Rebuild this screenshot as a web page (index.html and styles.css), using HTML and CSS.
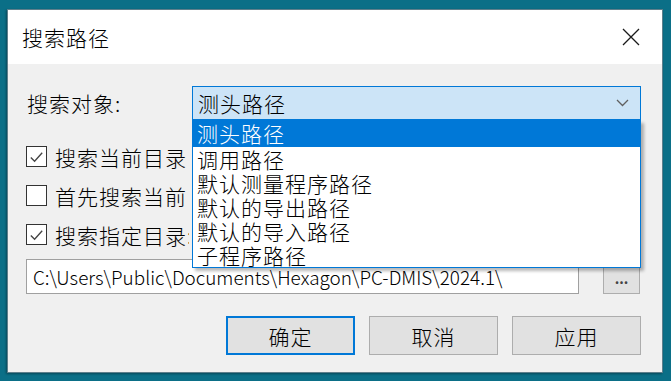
FILE: index.html
```html
<!DOCTYPE html>
<html lang="zh-CN">
<head>
<meta charset="utf-8">
<title>搜索路径</title>
<link rel="stylesheet" href="styles.css">
</head>
<body>
<div class="window">
  <div class="titlebar">
    <span class="title">搜索路径</span>
    <svg class="close" width="18" height="18" viewBox="0 0 18 18"><path d="M1 1L17 17M17 1L1 17" stroke="#1a1a1a" stroke-width="1.3" fill="none"/></svg>
  </div>
  <div class="content">
    <div class="row-target">
      <label class="target-label">搜索对象:</label>
      <div class="combo-wrap">
        <div class="combo">
          <span class="combo-text">测头路径</span>
          <svg class="chev" width="13" height="8" viewBox="0 0 13 8"><path d="M1 1L6.5 6.5L12 1" stroke="#606060" stroke-width="1.3" fill="none"/></svg>
        </div>
        <ul class="dropdown">
          <li class="sel">测头路径</li>
          <li>调用路径</li>
          <li>默认测量程序路径</li>
          <li>默认的导出路径</li>
          <li>默认的导入路径</li>
          <li>子程序路径</li>
        </ul>
      </div>
    </div>
    <div class="checks">
      <div class="check-row"><span class="box"><svg width="20" height="20" viewBox="0 0 20 20"><path d="M4 10.5L8 14.5L16 5.5" stroke="#444" stroke-width="1.4" fill="none"/></svg></span><span class="clabel">搜索当前目录</span></div>
      <div class="check-row"><span class="box"></span><span class="clabel">首先搜索当前目录</span></div>
      <div class="check-row"><span class="box"><svg width="20" height="20" viewBox="0 0 20 20"><path d="M4 10.5L8 14.5L16 5.5" stroke="#444" stroke-width="1.4" fill="none"/></svg></span><span class="clabel">搜索指定目录:</span></div>
    </div>
    <div class="path-row">
      <div class="path-input">C:\Users\Public\Documents\Hexagon\PC-DMIS\2024.1\</div>
      <button class="browse">...</button>
    </div>
    <div class="buttons">
      <button class="btn default">确定</button>
      <button class="btn">取消</button>
      <button class="btn">应用</button>
    </div>
  </div>
</div>
</body>
</html>
```
FILE: styles.css
```css
* { box-sizing: border-box; }
html, body { margin: 0; padding: 0; }
body {
  width: 671px;
  height: 381px;
  background: #0b6f87;
  font-family: "Noto Sans CJK SC", "Noto Sans", sans-serif;
  font-weight: 300;
  color: #000;
  overflow: hidden;
  padding: 9px 0 0 7px;
}
.window {
  width: 656px;
  height: 364px;
  border: 1px solid #5e7f8c;
  background: #f0f0f0;
  display: flex;
  flex-direction: column;
  box-shadow: -1px 1px 2px rgba(0,0,0,0.35);
}
.titlebar {
  height: 54px;
  background: #fff;
  display: flex;
  align-items: center;
  justify-content: space-between;
  padding: 0 22px 0 14px;
}
.title {
  font-size: 21px;
  letter-spacing: 1px;
}
.close { display: block; }
.content {
  flex: 1;
  padding: 22px 21px 0 18px;
  display: flex;
  flex-direction: column;
}
.row-target {
  display: flex;
  align-items: center;
  height: 34px;
}
.target-label {
  width: 166px;
  font-size: 21px;
  letter-spacing: 1px;
  padding-left: 1px;
}
.combo-wrap {
  position: relative;
  flex: 1;
  height: 34px;
}
.combo {
  height: 34px;
  border: 1px solid #0078d7;
  background: #cce4f7;
  display: flex;
  align-items: center;
  justify-content: space-between;
  padding: 0 11px 0 5px;
}
.combo-text { font-size: 21px; letter-spacing: 1px; }
.chev { display: block; }
.dropdown {
  position: absolute;
  top: 34px;
  left: 0;
  right: 0;
  margin: 0;
  padding: 0;
  list-style: none;
  background: #fff;
  border: 1px solid #0078d7;
  box-shadow: 3px 3px 3px rgba(0,0,0,0.28);
  z-index: 5;
}
.dropdown li {
  height: 24px;
  line-height: 24px;
  font-size: 21px;
  letter-spacing: 1px;
  padding-left: 4px;
  white-space: nowrap;
}
.dropdown li.sel {
  background: #0078d7;
  color: #fff;
  height: 26px;
}
.checks {
  margin-top: 17px;
  display: flex;
  flex-direction: column;
}
.check-row {
  height: 39px;
  display: flex;
  align-items: center;
}
.box {
  width: 21px;
  height: 21px;
  border: 1px solid #333;
  background: #fff;
  display: flex;
  align-items: center;
  justify-content: center;
  margin-right: 8px;
  flex: none;
}
.box svg { display: block; }
.clabel {
  font-size: 21px;
  letter-spacing: 1px;
  white-space: nowrap;
  width: 134px;
  overflow: hidden;
}
.path-row {
  margin-top: 4px;
  display: flex;
  align-items: center;
  gap: 24px;
}
.path-input {
  width: 553px;
  height: 35px;
  border: 1px solid #a0a0a0;
  background: #fff;
  font-size: 18.9px;
  line-height: 33px;
  padding-left: 6px;
  white-space: nowrap;
  overflow: hidden;
}
.browse {
  width: 37px;
  height: 36px;
  border: 1px solid #adadad;
  background: #e1e1e1;
  font-family: inherit;
  font-size: 14px;
  font-weight: bold;
  color: #444;
  padding: 4px 0 0 0;
}
.buttons {
  margin-top: 22px;
  display: flex;
  justify-content: flex-end;
  gap: 14px;
}
.btn {
  width: 129px;
  height: 39px;
  border: 1px solid #adadad;
  background: #e1e1e1;
  font-family: inherit;
  font-weight: 300;
  font-size: 21px;
  letter-spacing: 1px;
  color: #000;
  padding: 0;
}
.btn.default {
  border: 2px solid #0078d7;
}
```
